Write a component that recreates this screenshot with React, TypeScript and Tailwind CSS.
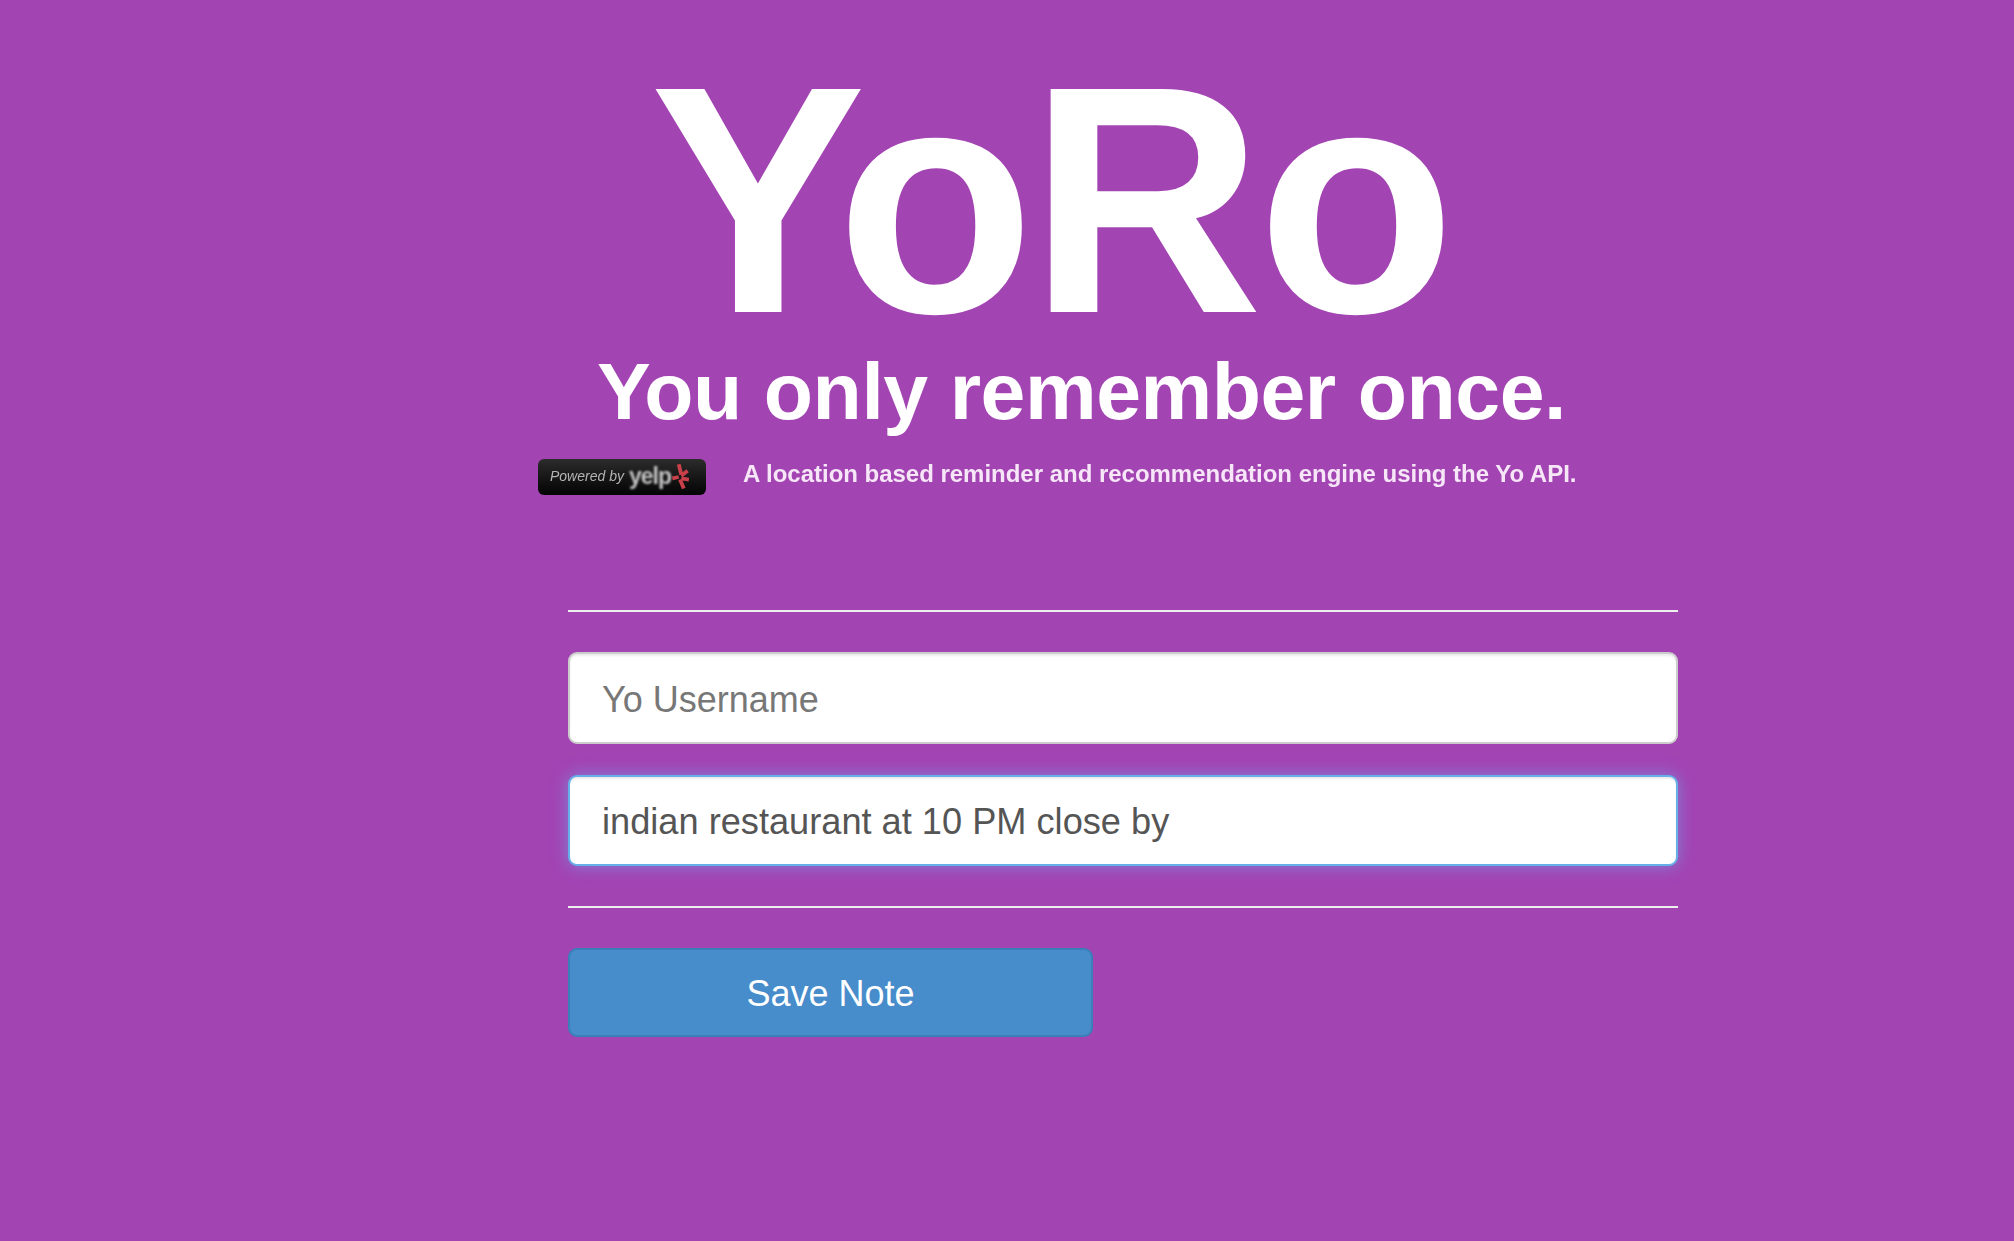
const App = () => {
  return (
    <div className="min-h-[1241px] bg-[#a344b3] font-['Liberation_Sans',Arial,sans-serif] overflow-hidden">
      <div className="ml-[520px] w-[1200px] pt-[54px]">
        <h1 className="ml-[130px] text-[324px] leading-[292px] font-bold text-white tracking-[-5.5px] blur-[0.6px]">YoRo</h1>
        <h2 className="ml-[77px] text-[80.6px] leading-[90px] font-bold text-white tracking-[-0.45px] blur-[0.5px] whitespace-nowrap">You only remember once.</h2>
        <div className="flex items-center mt-[20px]">
          <div className="ml-[18px] w-[168px] h-[36px] rounded-[6px] bg-gradient-to-b from-[#2c2c2c] to-[#050505] flex items-center pl-[12px] gap-[5px]">
            <span className="text-[14px] italic text-[#b5b5b5] whitespace-nowrap blur-[0.6px]">Powered by</span>
            <span className="text-[23px] leading-none font-bold text-[#c4c4c4] tracking-[-1px] blur-[0.8px]">yelp</span>
            <svg width="18" height="28" viewBox="0 0 14 22" className="ml-[-5px] blur-[0.5px]">
              <path d="M6 1l2 8M13 6L8 10M14 13l-6-1M10 20L7 13M1 12l5-1" stroke="#c9404a" strokeWidth="3" fill="none" />
            </svg>
          </div>
          <p className="ml-[37px] mb-[5px] text-[24px] font-bold text-[#f6e6f8] whitespace-nowrap tracking-[-0.02px] blur-[0.3px]">A location based reminder and recommendation engine using the Yo API.</p>
        </div>
        <form className="ml-[48px] w-[1110px] mt-[113px]">
          <hr className="border-t-2 border-[#eeeeee]" />
          <input
            placeholder="Yo Username"
            className="block w-full h-[92px] mt-[40px] px-[32px] pt-[4px] bg-white rounded-[9px] border-2 border-[#cccccc] shadow-[inset_0_2px_2px_rgba(0,0,0,0.075)] text-[36px] text-[#555555] placeholder:text-[#777777] outline-none"
          />
          <input
            defaultValue="indian restaurant at 10 PM close by"
            className="block w-full h-[91px] mt-[31px] px-[32px] pt-[3px] bg-white rounded-[9px] border-2 border-[#66afe9] shadow-[inset_0_2px_2px_rgba(0,0,0,0.075),0_0_16px_rgba(102,175,233,0.6)] text-[36.2px] text-[#555555] outline-none"
          />
          <hr className="mt-[40px] border-t-2 border-[#eeeeee]" />
          <button type="button" className="block w-[525px] h-[89px] mt-[40px] pt-[2px] bg-[#478ccb] border-2 border-[#3b7fb9] rounded-[9px] text-[36px] text-white">
            Save Note
          </button>
        </form>
      </div>
    </div>
  );
};

export default App;
